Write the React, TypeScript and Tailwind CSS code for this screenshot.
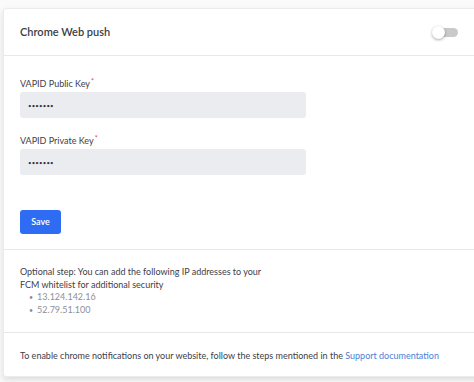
const ips = ['13.124.142.16', '52.79.51.100'];

const Toggle = () => (
  <div className="relative w-[26px] h-[14px] flex items-center">
    <div className="absolute right-0 w-[20px] h-[9px] rounded-full bg-[#c9c9cc]" />
    <div className="absolute left-0 w-[13px] h-[13px] rounded-full bg-white shadow-[0_1px_3px_rgba(0,0,0,0.35)]" />
  </div>
);

const KeyField = ({ label }: { label: string }) => (
  <div className="flex flex-col gap-[2px]">
    <label className="text-[9px] leading-[12px] text-[#3d4049]">
      {label}
      <sup className="text-[#e0433a] text-[7px] ml-[1px]">*</sup>
    </label>
    <div className="w-[286px] h-[26px] rounded-[3px] bg-[#ebecf0] flex items-center px-[8px] text-[6px] tracking-[0.2px] text-[#33363f]">
      •••••••
    </div>
  </div>
);

export default function App() {
  return (
    <div
      className="w-[474px] h-[382px] overflow-hidden bg-[#fafafa] pt-[8px] pl-[3px]"
      style={{ fontFamily: 'Lato, "Open Sans", sans-serif' }}
    >
      <div className="w-[490px] bg-white border border-[#ececee] rounded-[3px] shadow-[0_3px_6px_rgba(0,0,0,0.12)]">
        <div className="h-[47px] px-[16px] pr-[34px] flex items-center justify-between border-b border-[#e8e8ea]">
          <span className="text-[11px] font-semibold text-[#3a3d46]">Chrome Web push</span>
          <Toggle />
        </div>

        <div className="px-[16px] pt-[22px] pb-[15px] border-b border-[#e8e8ea]">
          <KeyField label="VAPID Public Key" />
          <div className="mt-[17px]">
            <KeyField label="VAPID Private Key" />
          </div>
          <button className="mt-[35px] w-[41px] h-[24px] rounded-[3px] bg-[#2d6cf3] text-white text-[9px] font-semibold">
            Save
          </button>
        </div>

        <div className="px-[16px] pt-[16px] pb-[15px] border-b border-[#e8e8ea] text-[9px] leading-[12.7px] text-[#3d4049]">
          <p>Optional step: You can add the following IP addresses to your</p>
          <p>FCM whitelist for additional security</p>
          <ul className="pl-[9px]">
            {ips.map((ip) => (
              <li key={ip} className="flex items-center gap-[4px] text-[#8c8f98]">
                <span className="text-[7px]">•</span>
                {ip}
              </li>
            ))}
          </ul>
        </div>

        <div className="px-[16px] pt-[16px] pb-[14px] text-[9px] leading-[13px] text-[#3d4049]">
          To enable chrome notifications on your website, follow the steps mentioned in the{' '}
          <a className="text-[#4b80d6]">Support documentation</a>
        </div>
      </div>
    </div>
  );
}
